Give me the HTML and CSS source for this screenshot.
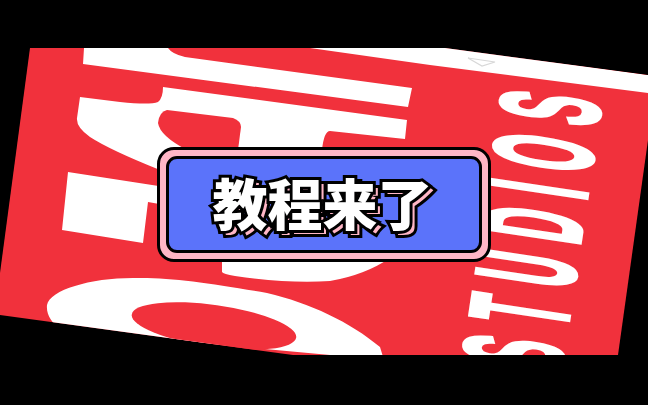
FILE: index.html
```html
<!DOCTYPE html>
<html lang="zh-CN">
<head>
  <meta charset="UTF-8">
  <title>教程来了</title>
  <link rel="stylesheet" href="styles.css">
</head>
<body>
  <div class="stage">
    <svg class="poster" viewBox="0 0 648 405" width="648" height="405">
      <defs>
        <clipPath id="sheet">
          <polygon points="30,48 445,48 648,75 648,140 618,355 293,355 0,315 0,273"/>
        </clipPath>
      </defs>
      <g clip-path="url(#sheet)">
        <rect class="red" width="648" height="405"/>
        <!-- top edge of the sheet -->
        <polygon class="white" points="310,48 445,47 648,75 648,93 430,65"/>
        <polyline class="mark" points="468,58 495,62 482,66 468,58"/>
        <!-- big logo pieces -->
        <path class="white" d="M84,48 L168,48 Q172,54 185,57 L412,88 L408,107 L83,64 Z"/>
        <path class="white" d="M80,97 L120,102 Q150,105 158,102 Q163,98 163,87 L407,120 L405,139 L330,131 Q324,131 322,150 L160,170 Q110,150 90,137 Q76,127 77,118 Z"/>
        <path class="red" d="M167,110 L233,118 Q241,121 241,127 L238,150 L187,150 Q160,136 158,123 Q159,112 167,110 Z"/>
        <polygon class="white" points="68,172 165,187 165,205 148,202 143,243 62,230"/>
        <path class="white" d="M222,258 L222,272 Q223,274 235,276 Q290,284 330,281 Q365,275 390,258 Z"/>
        <path class="white" d="M47,305 C50,290 90,278 133,278 C170,277 210,283 267,293 C310,303 350,322 380,347 L384,360 L60,330 C52,322 46,315 47,305 Z"/>
        <ellipse class="red" cx="214" cy="326" rx="83" ry="21" transform="rotate(8 214 326)"/>
        <text class="studios" transform="translate(559.6 373) rotate(-81.5) scale(0.42 1.4)">STUDIOS</text>
      </g>
    </svg>
    <div class="badge">
      <div class="badge-inner">
        <span class="title" data-text="教程来了">教程来了</span>
      </div>
    </div>
  </div>
</body>
</html>
```

FILE: styles.css
```css
body {
  margin: 0;
  background: #000;
  overflow: hidden;
}
.stage {
  position: relative;
  width: 648px;
  height: 405px;
}
.poster {
  display: block;
}
.red { fill: #f1313c; }
.white { fill: #fff; }
.mark {
  fill: none;
  stroke: #d8d8d8;
  stroke-width: 1.2;
}
.studios {
  fill: #fff;
  stroke: #fff;
  stroke-width: 4;
  font-family: "Liberation Sans", sans-serif;
  font-weight: 700;
  font-size: 100px;
  letter-spacing: 35px;
}

/* banner over the picture */
.badge {
  position: absolute;
  left: 157px;
  top: 147px;
  width: 334px;
  height: 115px;
  box-sizing: border-box;
  padding: 6px;
  background: #ffb6c6;
  border: 3px solid #000;
  border-radius: 17px;
}
.badge-inner {
  height: 100%;
  box-sizing: border-box;
  display: flex;
  align-items: center;
  justify-content: center;
  padding-right: 3px;
  padding-bottom: 7px;
  background: #5b73fa;
  border: 3px solid #000;
  border-radius: 11px;
}
.title {
  position: relative;
  z-index: 0;
  color: #fff;
  font-family: "Noto Sans CJK SC", sans-serif;
  font-weight: 900;
  font-size: 55px;
  line-height: 1;
  white-space: nowrap;
  -webkit-text-stroke: 6px #000;
  paint-order: stroke fill;
}
.title::before {
  content: attr(data-text);
  position: absolute;
  left: 5px;
  top: 4px;
  z-index: -1;
  color: #ffb6c6;
}
```
